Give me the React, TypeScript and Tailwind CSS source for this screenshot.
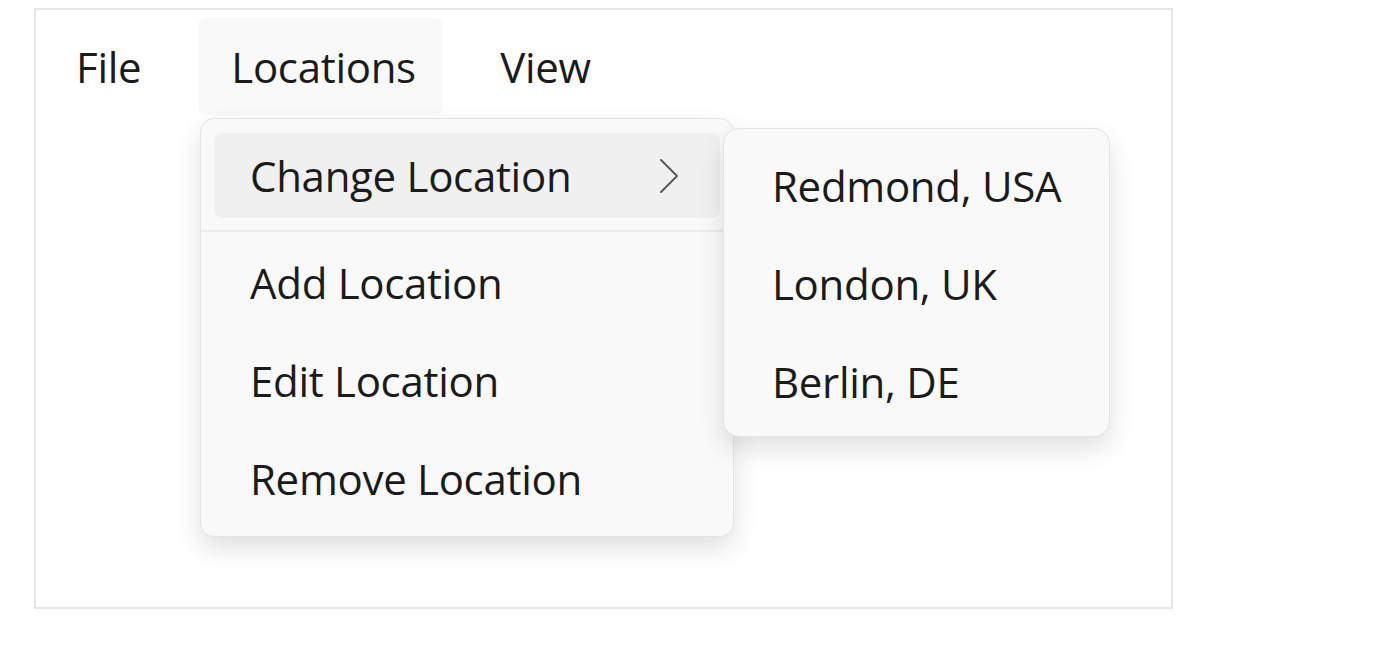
import React from "react";

const font = { fontFamily: '"Open Sans", "Noto Sans", sans-serif' };

function Chevron() {
  return (
    <svg width="22" height="38" viewBox="0 0 22 38" className="shrink-0">
      <polyline points="3,3 19,19 3,35" fill="none" stroke="#5a5a5a" strokeWidth="2" strokeLinecap="round" strokeLinejoin="round" />
    </svg>
  );
}

export default function App() {
  return (
    <div className="w-[1399px] h-[669px] bg-white text-[#1b1b1b] tracking-[-0.3px]" style={font}>
      <div className="ml-[34px] pt-[8px]">
        <div className="relative w-[1139px] h-[601px] border-2 border-[#e6e6e6] bg-white">
          <div className="flex items-center gap-[24px] ml-[7px] mt-[8px] text-[42px] leading-none">
            <div className="h-[97px] px-[33px] flex items-center rounded-[8px]">File</div>
            <div className="h-[97px] w-[245px] pl-[33px] flex items-center rounded-[8px] bg-[#f9f9f9]">Locations</div>
            <div className="h-[97px] px-[33px] flex items-center rounded-[8px]">View</div>
          </div>

          {/* main dropdown */}
          <div className="absolute left-[164px] top-[108px] w-[534px] h-[419px] rounded-[14px] border border-[#e3e3e3] bg-[#f9f9f9] shadow-[0_12px_26px_rgba(0,0,0,0.12)] text-[42px] leading-none">
            <div className="pt-[14px] px-[13px]">
              <div className="h-[85px] rounded-[8px] bg-[#f0f0f0] flex items-center justify-between pl-[36px] pr-[40px]">
                <span>Change Location</span>
                <Chevron />
              </div>
            </div>
            <div className="mt-[12px] h-[2px] bg-[#ebebeb]" />
            <div className="flex flex-col px-[13px] pt-[2px]">
              <div className="h-[98px] flex items-center pl-[36px]">Add Location</div>
              <div className="h-[98px] flex items-center pl-[36px]">Edit Location</div>
              <div className="h-[98px] flex items-center pl-[36px]">Remove Location</div>
            </div>
          </div>

          {/* submenu */}
          <div className="absolute left-[687px] top-[118px] w-[387px] h-[309px] rounded-[16px] border border-[#e3e3e3] bg-[#f9f9f9] shadow-[0_12px_26px_rgba(0,0,0,0.12)] text-[42px] leading-none">
            <div className="flex flex-col pt-[8px] pl-[48px]">
              <div className="h-[98px] flex items-center">Redmond, USA</div>
              <div className="h-[98px] flex items-center">London, UK</div>
              <div className="h-[98px] flex items-center">Berlin, DE</div>
            </div>
          </div>
        </div>
      </div>
    </div>
  );
}
